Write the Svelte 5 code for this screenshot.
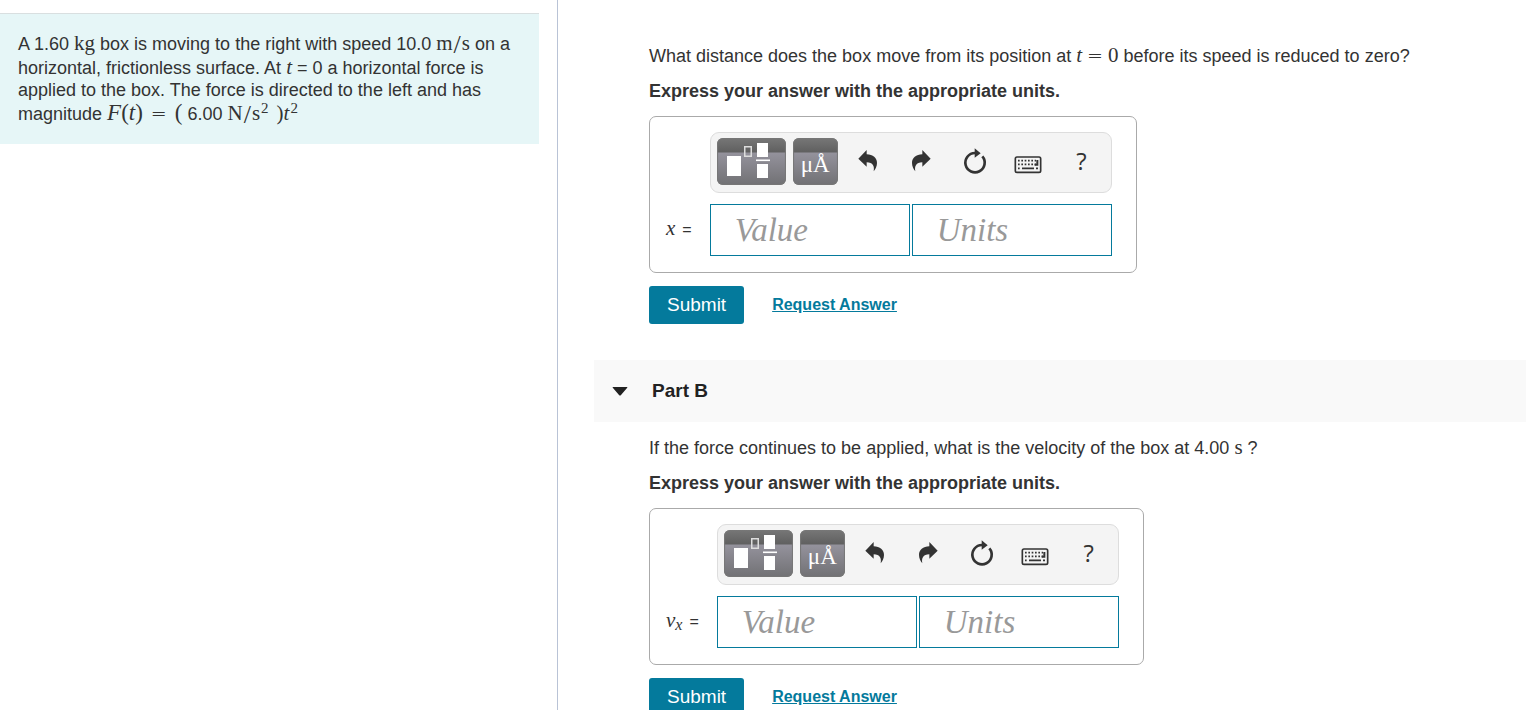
<script>
  const parts = $state([
    { id: 'a', symbol: 'x', sub: '', value: '', units: '' },
    { id: 'b', symbol: 'v', sub: 'x', value: '', units: '' }
  ]);
  let open = $state(true);
</script>

{#snippet answer(part)}
  <form class="answer" onsubmit={(e) => e.preventDefault()}>
    <div class="entry">
      <div class="toolbar" role="toolbar" aria-label="Answer tools">
        <button type="button" class="tile templates" aria-label="Templates">
          <svg width="69" height="47" viewBox="0 0 69 47">
            <rect x="10" y="18" width="14" height="20" fill="#fff" />
            <rect x="27.75" y="8.75" width="6.5" height="9.5" fill="none" stroke="#ddd" stroke-width="1.5" />
            <rect x="40" y="5" width="11" height="14" fill="#fff" />
            <rect x="39" y="21.500" width="14" height="1.600" fill="#fff" />
            <rect x="40" y="26" width="11" height="14" fill="#fff" />
          </svg>
        </button>
        <button type="button" class="tile symbols" aria-label="Symbols">μÅ</button>
        <button type="button" class="tool" aria-label="Undo">
          <svg width="26" height="30" viewBox="0 0 78 90">
            <path fill="#333" d="M10 38 35 12V25C54 25 66 36 66 51C66 61 61 70 56 76C59 61 54 49 35 49V62Z" />
          </svg>
        </button>
        <button type="button" class="tool" aria-label="Redo">
          <svg width="26" height="30" viewBox="0 0 78 90">
            <path fill="#333" d="M68 38 43 12V25C24 25 12 36 12 51C12 61 17 70 22 76C19 61 24 49 43 49V62Z" />
          </svg>
        </button>
        <button type="button" class="tool" aria-label="Reset">
          <svg width="26" height="30" viewBox="0 0 78 90">
            <path fill="none" stroke="#333" stroke-width="8" d="M61 31A29 29 0 1 1 39 21" />
            <path fill="#333" d="M38 7 56 22 38 35Z" />
          </svg>
        </button>
        <button type="button" class="tool" aria-label="Keyboard shortcuts">
          <svg width="28" height="30" viewBox="0 0 84 90">
            <rect x="4" y="33" width="76" height="46" rx="5" fill="none" stroke="#333" stroke-width="5" />
            <path stroke="#333" stroke-width="5" stroke-dasharray="5 5" d="M12 44H66M12 55H66M12 67H18" />
            <path stroke="#333" stroke-width="5" d="M24 67H60M66 67H72" />
            <path fill="none" stroke="#333" stroke-width="6" d="M70 42V56H62" />
          </svg>
        </button>
        <button type="button" class="tool help" aria-label="Help">?</button>
      </div>
      <label class="name" for="value-{part.id}">
        <span><i>{part.symbol}</i>{#if part.sub}<sub>{part.sub}</sub>{/if}</span>
        <span>=</span>
      </label>
      <div class="fields">
        <input id="value-{part.id}" placeholder="Value" bind:value={part.value} />
        <input aria-label="Units" placeholder="Units" bind:value={part.units} />
      </div>
    </div>
    <div class="actions">
      <button class="submit">Submit</button>
      <a href="#request-{part.id}">Request Answer</a>
    </div>
  </form>
{/snippet}

<div class="page">
  <aside>
    <p class="intro">
      A 1.60 <span class="math">kg</span> box is moving to the right with speed 10.0
      <span class="math">m<span class="slash">/</span>s</span> on a horizontal, frictionless surface. At
      <span class="math"><i>t</i></span> = 0 a horizontal force is applied to the box. The force is directed to the
      left and has magnitude
      <span class="math wide"><i>F</i>(<i>t</i>)<span class="eq">=</span>(</span>
      6.00 <span class="math">N<span class="slash">/</span>s<sup>2</sup></span>&nbsp;<span class="math close">)<i>t</i><sup>2</sup></span>
    </p>
  </aside>
  <main>
    <section class="first">
      <p>
        What distance does the box move from its position at
        <span class="math"><i>t</i><span class="eq">=</span>0</span> before its speed is reduced to zero?
      </p>
      <p class="strong">Express your answer with the appropriate units.</p>
      {@render answer(parts[0])}
    </section>
    <h2>
      <button type="button" aria-expanded={open} onclick={() => (open = !open)}>
        <svg class:closed={!open} width="16" height="9" viewBox="0 0 16 9">
          <path fill="#222" d="M1 0H15Q16 0 15 1L9 8Q8 9 7 8L1 1Q0 0 1 0Z" />
        </svg>
        Part B
      </button>
    </h2>
    {#if open}
      <section>
        <p>
          If the force continues to be applied, what is the velocity of the box at 4.00 <span class="math">s</span> ?
        </p>
        <p class="strong">Express your answer with the appropriate units.</p>
        {@render answer(parts[1])}
      </section>
    {/if}
  </main>
</div>

<style>
  :global(body) {
    margin: 0;
    background: #fff;
  }
  .page {
    display: grid;
    grid-template-columns: 558fr 968fr;
    height: 100vh;
    font: 18px/22px "Liberation Sans", Arial, sans-serif;
    color: #333;
  }
  aside,
  main {
    box-sizing: border-box;
    min-width: 0;
    overflow: auto;
    scrollbar-width: none;
  }
  aside {
    padding: 13px 18px 0 0;
    border-right: 1px solid #b9c3d6;
  }
  p {
    margin: 0 0 13px;
  }
  .intro {
    margin: 0;
    padding: 17px 18px 19px;
    background: #e6f6f7;
    border-top: 1px solid #d9dfe0;
  }
  .math {
    font: 21px/24px "Liberation Serif", "Times New Roman", serif;
    white-space: nowrap;
  }
  .wide {
    font-size: 23px;
  }
  .wide .eq {
    padding: 0 8px;
  }
  .close {
    padding-left: 3px;
  }
  .math sup {
    padding-left: 1px;
    font-size: 15px;
    line-height: 0;
    vertical-align: 7px;
  }
  .slash {
    padding: 0 1px;
    font-size: 26px;
    line-height: 0;
    vertical-align: -3px;
  }
  .eq {
    padding: 0 5px;
    font-family: "DejaVu Sans", sans-serif;
    font-weight: 200;
    font-size: 19px;
    line-height: 0;
  }
  main {
    padding-left: 36px;
  }
  section {
    padding: 13px 16px 0 55px;
  }
  .first {
    padding-top: 43px;
    padding-bottom: 36px;
  }
  .strong {
    margin-bottom: 14px;
    font-weight: 700;
  }
  .entry {
    display: inline-grid;
    grid-template-columns: auto auto;
    column-gap: 18px;
    row-gap: 11px;
    align-items: center;
    padding: 15px 24px 16px 16px;
    border: 1px solid #aaa;
    border-radius: 7px;
    vertical-align: top;
  }
  .toolbar {
    grid-column: 2;
    box-sizing: border-box;
    display: flex;
    align-items: center;
    gap: 7px;
    height: 61px;
    padding: 0 6px 2px;
    background: #f4f4f4;
    border: 1px solid #ddd;
    border-radius: 9px;
  }
  button {
    padding: 0;
    border: 0;
    background: none;
    color: inherit;
    font: inherit;
    cursor: pointer;
  }
  .tile {
    height: 47px;
    border-radius: 6px;
    background: linear-gradient(#777 0, #606060 14px, #94929c 15px, #717174 100%);
    box-shadow: inset 0 0 1px 1px #777;
    color: #fff;
  }
  .tile svg,
  .tool svg {
    display: block;
  }
  .templates {
    width: 69px;
  }
  .symbols {
    width: 45px;
    padding-top: 6px;
    font: 23px/40px "Liberation Serif", "Times New Roman", serif;
  }
  .tool {
    display: flex;
    flex: 1;
    justify-content: center;
    padding-bottom: 1px;
    color: #333;
  }
  .help {
    font: 24px/30px "Open Sans", sans-serif;
  }
  .name {
    display: flex;
    gap: 7px;
    font-size: 16px;
  }
  .name i,
  .name sub {
    font: italic 21px/18px "Liberation Serif", "Times New Roman", serif;
  }
  .name sub {
    font-size: 16px;
    line-height: 0;
    vertical-align: -3px;
  }
  .fields {
    display: flex;
    gap: 2px;
  }
  input {
    box-sizing: border-box;
    width: 200px;
    height: 52px;
    padding: 0 24px;
    border: 1px solid #047a9c;
    border-radius: 0;
    font: italic 33px "Liberation Serif", "Times New Roman", serif;
    color: #333;
  }
  input::placeholder {
    color: #999;
    opacity: 1;
  }
  .actions {
    display: flex;
    align-items: center;
    gap: 28px;
    margin-top: 13px;
  }
  .submit {
    padding: 8px 18px;
    background: #047a9c;
    border-radius: 3px;
    color: #fff;
    font-size: 19px;
  }
  a {
    color: #047a9c;
    font-size: 16px;
    font-weight: 700;
  }
  h2 {
    margin: 0;
    background: #f9f9f9;
    color: #222;
    font-size: 19px;
  }
  h2 button {
    display: flex;
    align-items: center;
    gap: 24px;
    width: 100%;
    padding: 20px 18px;
  }
  .closed {
    transform: rotate(-90deg);
  }
</style>
